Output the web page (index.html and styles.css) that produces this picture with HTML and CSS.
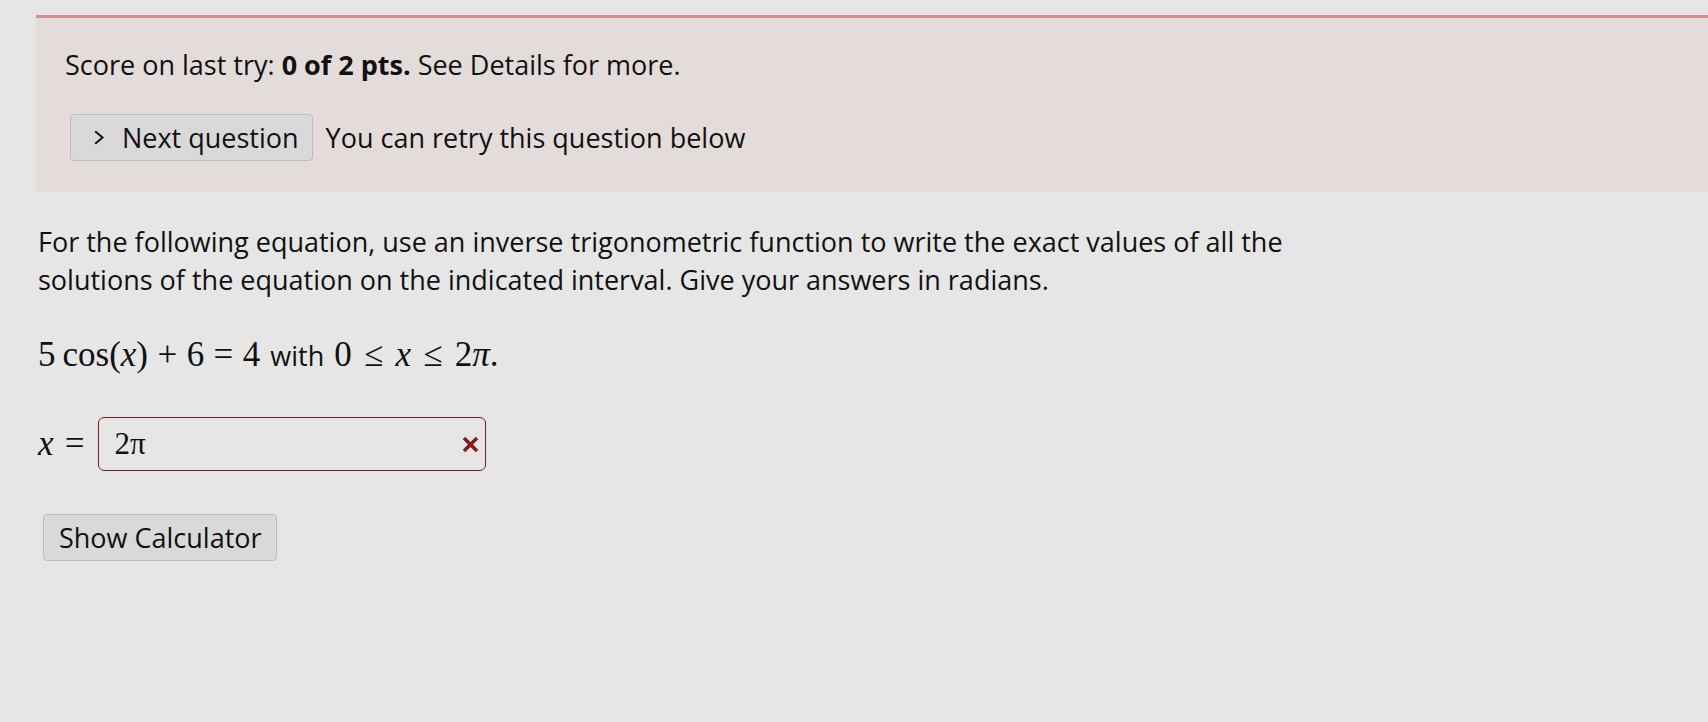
FILE: index.html
```html
<!DOCTYPE html>
<html>
<head>
<meta charset="utf-8">
<title>Question</title>
<link rel="stylesheet" href="styles.css">
</head>
<body>
<div class="page">

<div class="scorebox">
  <p class="score">Score on last try: <strong>0 of 2 pts.</strong> See Details for more.</p>
  <div class="retry">
    <button class="btn next"><svg class="chev" width="10" height="15" viewBox="0 0 10 15"><path d="M1.2 1.2 L8.6 7.5 L1.2 13.8" fill="none" stroke="#111" stroke-width="2"/></svg>Next question</button>
    <span>You can retry this question below</span>
  </div>
</div>

<div class="question">
  <p class="prompt">For the following equation, use an inverse trigonometric function to write the exact values of all the solutions of the equation on the indicated interval. Give your answers in radians.</p>

  <p class="eq"><span class="math">5<span class="fn">cos</span>(<i>x</i>)<span class="op">+</span>6<span class="op">=</span>4</span> <span class="word">with</span> <span class="math">0<span class="op rel">&le;</span><i>x</i><span class="op rel">&le;</span>2<i>&pi;</i>.</span></p>

  <div class="answer">
    <span class="math label"><i>x</i><span class="op">=</span></span>
    <div class="field">
      <span class="val">2&pi;</span>
      <svg class="wrong" width="17" height="17" viewBox="0 0 17 17"><path d="M2 2 L15 15 M15 2 L2 15" stroke="#861c1c" stroke-width="3.6"/></svg>
    </div>
  </div>

  <button class="btn calc">Show Calculator</button>
</div>

</div>
</body>
</html>
```

FILE: styles.css
```css
body {
   margin: 0;
   background-color: #e6e6e6;
   font-family: "Open Sans", sans-serif;
   font-size: 27px;
   color: #111;
}

.page {
   padding: 15px 0 0 36px;
}

.scorebox {
   background-color: #e4dbdb;
   border-top: 3px solid #d98e8e;
   padding: 30px 0 31px 29px;
}

.score {
   margin: 0 0 32px 0;
   line-height: 34px;
}

.retry {
   display: flex;
   align-items: center;
   gap: 13px;
   margin-left: 5px;
}

.btn {
   font-family: "Open Sans", sans-serif;
   font-size: 27px;
   color: #111;
   background-color: #d9d9d9;
   border: 1px solid #bdbdbd;
   border-radius: 4px;
   height: 47px;
   padding: 0 14px 0 15px;
}

.next {
   display: flex;
   align-items: center;
   gap: 18px;
   padding-left: 23px;
   padding-right: 13px;
}

.question {
   padding: 31px 0 0 2px;
}

.prompt {
   margin: 0;
   line-height: 38px;
   max-width: 1300px;
}

.math {
   font-family: "Liberation Serif", serif;
   font-size: 35px;
}

.fn {
   margin-left: 0.2em;
}

.op {
   margin: 0 0.27em;
}

.op.rel {
   margin: 0 0.35em;
}

.word {
   margin: 0 3px;
}

.eq {
   margin: 36px 0 0 0;
   line-height: 40px;
}

.answer {
   display: flex;
   align-items: center;
   margin-top: 41px;
}

.label .op {
   margin-left: 0.32em;
   margin-right: 0.4em;
}

.field {
   width: 388px;
   height: 54px;
   border: 1px solid #7d1f1f;
   border-radius: 6px;
   display: flex;
   align-items: center;
   justify-content: space-between;
   padding: 0 6px 0 15px;
   box-sizing: border-box;
}

.val {
   font-family: "Liberation Serif", serif;
   font-size: 31px;
}

.calc {
   margin: 43px 0 0 5px;
}
```
